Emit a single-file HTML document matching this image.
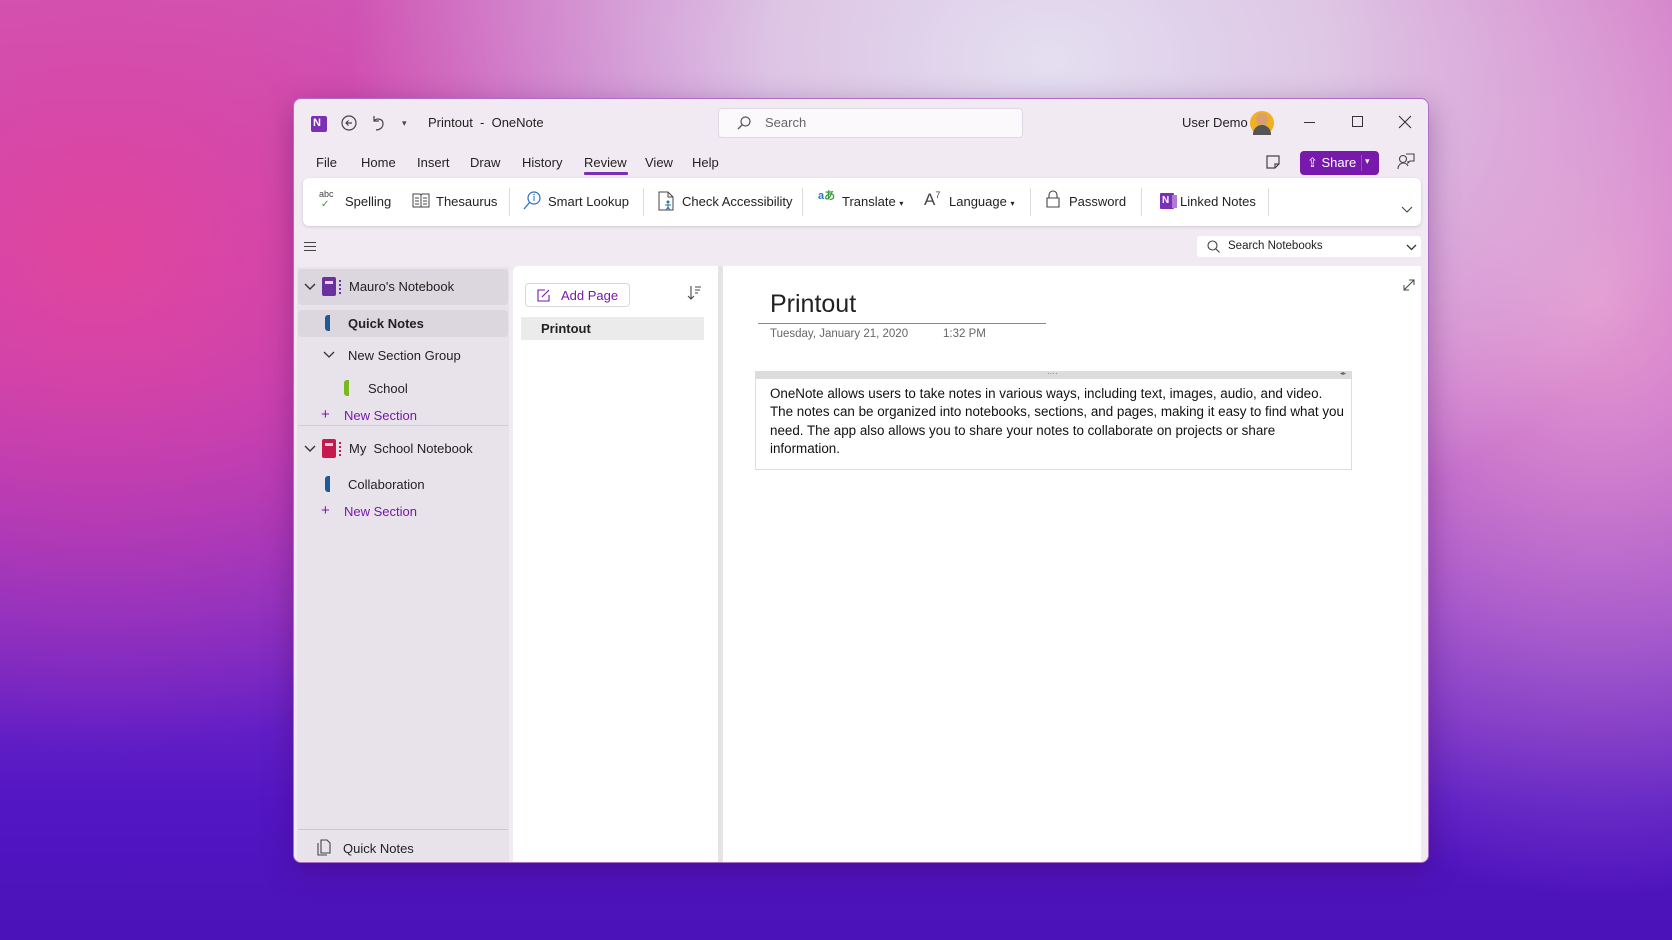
<!DOCTYPE html>
<html><head><meta charset="utf-8"><style>
*{margin:0;padding:0;box-sizing:border-box}
body{width:1672px;height:940px;overflow:hidden;position:relative;font-family:"Liberation Sans",sans-serif;color:#222;
background:
radial-gradient(ellipse 700px 500px at 1050px 60px,#e4dff0 0%,rgba(225,215,235,0.85) 40%,rgba(220,200,230,0) 100%),
radial-gradient(ellipse 500px 600px at 1600px 300px,#e39ad0 0%,rgba(220,120,200,0) 100%),
radial-gradient(ellipse 600px 500px at 100px 250px,#e0459e 0%,rgba(210,60,170,0) 100%),
linear-gradient(180deg,#c85cbf 0%,#b03cc4 40%,#7d2cc8 65%,#5316c4 85%,#4a12b8 100%);}
.a{position:absolute}
.win{left:293px;top:98px;width:1136px;height:765px;background:#f2eaf3;border-radius:8px;border:1px solid #b06cc9;overflow:hidden;box-shadow:0 8px 30px rgba(60,0,80,.35)}
.t{position:absolute;font-size:13px;white-space:nowrap;line-height:1}
svg{position:absolute;overflow:visible}
</style></head><body>
<div class="a win">
<div class="a" style="left:17px;top:17px;width:16px;height:16px;background:#7b2fb5;border-radius:2px"></div>
<div class="t" style="left:19px;top:19px;color:#fff;font-weight:bold;font-size:11px">N</div>
<svg style="left:47px;top:16px" width="16" height="16"><circle cx="8" cy="8" r="7" fill="none" stroke="#444" stroke-width="1.2"/><path d="M11 8H5M7.5 5.5L5 8l2.5 2.5" fill="none" stroke="#444" stroke-width="1.2"/></svg>
<svg style="left:76px;top:15px" width="16" height="18"><path d="M4 2v5h5M4 7c2-3 9-3 9 3 0 4-4 6-7 6" fill="none" stroke="#444" stroke-width="1.2"/></svg>
<div class="t" style="left:108px;top:20px;font-size:9px;color:#444">▾</div>
<div class="t" style="left:134px;top:17px">Printout &nbsp;-&nbsp; OneNote</div>
<div class="a" style="left:424px;top:9px;width:305px;height:30px;background:#fbf9fb;border:1px solid #e0d8e2;border-radius:4px"></div>
<svg style="left:443px;top:17px" width="14" height="14"><circle cx="8.5" cy="5.5" r="4.5" fill="none" stroke="#555" stroke-width="1.2"/><path d="M5.5 8.5L1 13" stroke="#555" stroke-width="1.3"/></svg>
<div class="t" style="left:471px;top:17px;color:#666">Search</div>
<div class="t" style="left:888px;top:17px">User Demo</div>
<div class="a" style="left:956px;top:12px;width:24px;height:24px;border-radius:50%;background:#f0b020"></div>
<div class="a" style="left:962px;top:14px;width:12px;height:13px;border-radius:50%;background:#d8a070"></div>
<div class="a" style="left:959px;top:26px;width:18px;height:10px;border-radius:9px 9px 0 0;background:#555"></div>
<div class="a" style="left:1010px;top:23px;width:11px;height:1px;background:#333"></div>
<div class="a" style="left:1058px;top:17px;width:11px;height:11px;border:1px solid #333"></div>
<svg style="left:1105px;top:17px" width="12" height="12"><path d="M0 0L12 12M12 0L0 12" stroke="#333" stroke-width="1.1"/></svg>
<div class="t" style="left:22px;top:57px">File</div>
<div class="t" style="left:67px;top:57px">Home</div>
<div class="t" style="left:123px;top:57px">Insert</div>
<div class="t" style="left:176px;top:57px">Draw</div>
<div class="t" style="left:228px;top:57px">History</div>
<div class="t" style="left:290px;top:57px">Review</div>
<div class="a" style="left:290px;top:73px;width:44px;height:3px;background:#7b2fb5;border-radius:1px"></div>
<div class="t" style="left:351px;top:57px">View</div>
<div class="t" style="left:398px;top:57px">Help</div>
<svg style="left:971px;top:55px" width="16" height="16"><path d="M2 2h12v8l-4 4H2z M10 14v-4h4" fill="none" stroke="#444" stroke-width="1.2"/></svg>
<div class="a" style="left:1006px;top:52px;width:79px;height:24px;background:#7719aa;border-radius:4px"></div>
<div class="t" style="left:1013px;top:57px;color:#fff;font-size:13px">⇪ Share</div>
<div class="a" style="left:1067px;top:56px;width:1px;height:16px;background:#9a4cc4"></div>
<div class="t" style="left:1071px;top:58px;color:#fff;font-size:9px">▾</div>
<svg style="left:1103px;top:54px" width="18" height="18"><circle cx="6" cy="6" r="3.5" fill="none" stroke="#444" stroke-width="1.1"/><path d="M1 16c0-4 3-6 5-6s4 1 5 3M9 1h8v7h-4l-2 2v-2" fill="none" stroke="#444" stroke-width="1.1"/></svg>
<div class="a" style="left:9px;top:79px;width:1118px;height:48px;background:#fff;border-radius:6px;box-shadow:0 1px 3px rgba(0,0,0,.15)"></div>
<div class="t" style="left:25px;top:91px;font-size:9px;color:#444">abc</div>
<div class="t" style="left:27px;top:101px;font-size:10px;color:#3a9a3a">✓</div>
<div class="t" style="left:51px;top:96px">Spelling</div>
<svg style="left:118px;top:94px" width="18" height="15"><path d="M1 1h7l1 1 1-1h7v13H1z M9 2v12 M3 5h4M3 8h4M3 11h4M11 5h4M11 8h4M11 11h4" fill="none" stroke="#444" stroke-width="1"/></svg>
<div class="t" style="left:142px;top:96px">Thesaurus</div>
<div class="a" style="left:215px;top:89px;width:1px;height:28px;background:#ddd"></div>
<svg style="left:229px;top:92px" width="20" height="20"><circle cx="11" cy="7" r="6" fill="none" stroke="#2a6fb8" stroke-width="1.2"/><path d="M7 11L1 18" stroke="#2a6fb8" stroke-width="1.3"/><path d="M11 5v5" stroke="#2a6fb8"/><circle cx="11" cy="3.5" r=".8" fill="#2a6fb8"/></svg>
<div class="t" style="left:254px;top:96px">Smart Lookup</div>
<div class="a" style="left:349px;top:89px;width:1px;height:28px;background:#ddd"></div>
<svg style="left:364px;top:92px" width="18" height="20"><path d="M1 1h9l5 5v13H1z M10 1v5h5" fill="none" stroke="#444" stroke-width="1"/><circle cx="10" cy="11" r="1.5" fill="#2a6fb8"/><path d="M7 14h6M10 13v5M8 19l2-3 2 3" stroke="#2a6fb8" fill="none"/></svg>
<div class="t" style="left:388px;top:96px">Check Accessibility</div>
<div class="a" style="left:508px;top:89px;width:1px;height:28px;background:#ddd"></div>
<div class="t" style="left:524px;top:92px;font-size:11px;color:#2a7ab8;font-weight:bold">a<span style="color:#3a9a3a">あ</span></div>
<div class="t" style="left:548px;top:96px">Translate <span style="font-size:8px">▾</span></div>
<div class="t" style="left:630px;top:92px;font-size:17px;color:#444">A<span style="font-size:9px;vertical-align:top">7</span></div>
<div class="t" style="left:655px;top:96px">Language <span style="font-size:8px">▾</span></div>
<div class="a" style="left:736px;top:89px;width:1px;height:28px;background:#ddd"></div>
<svg style="left:752px;top:91px" width="14" height="18"><path d="M3 8V5a4 4 0 0 1 8 0v3 M1 8h12v9H1z" fill="none" stroke="#444" stroke-width="1.1"/></svg>
<div class="t" style="left:775px;top:96px">Password</div>
<div class="a" style="left:847px;top:89px;width:1px;height:28px;background:#ddd"></div>
<div class="a" style="left:866px;top:94px;width:14px;height:16px;background:#7b2fb5;border-radius:1px"></div>
<div class="a" style="left:878px;top:96px;width:5px;height:13px;background:#b07ad8"></div>
<div class="t" style="left:868px;top:97px;color:#fff;font-weight:bold;font-size:10px">N</div>
<div class="t" style="left:886px;top:96px">Linked Notes</div>
<div class="a" style="left:974px;top:89px;width:1px;height:28px;background:#ddd"></div>
<svg style="left:1108px;top:108px" width="10" height="6"><path d="M0 0l5 5 5-5" fill="none" stroke="#444" stroke-width="1.1"/></svg>
<div class="a" style="left:10px;top:143px;width:12px;height:1px;background:#444;box-shadow:0 4px 0 #444,0 8px 0 #444"></div>
<div class="a" style="left:903px;top:137px;width:224px;height:21px;background:#fff;border-radius:3px"></div>
<svg style="left:913px;top:141px" width="13" height="13"><circle cx="5.5" cy="5.5" r="4.5" fill="none" stroke="#444" stroke-width="1.1"/><path d="M9 9l3.5 3.5" stroke="#444" stroke-width="1.2"/></svg>
<div class="t" style="left:934px;top:142px;font-size:11.5px">Search Notebooks</div>
<svg style="left:1113px;top:146px" width="9" height="5"><path d="M0 0l4.5 4.5L9 0" fill="none" stroke="#333" stroke-width="1.3"/></svg>
<div class="a" style="left:3px;top:168px;width:212px;height:597px;background:#e8e3ea"></div>
<div class="a" style="left:4px;top:170px;width:210px;height:36px;background:#dcd6de;border-radius:4px"></div>
<svg style="left:11px;top:185px" width="10" height="6"><path d="M0 0l5 5 5-5" fill="none" stroke="#333" stroke-width="1.4"/></svg>
<div class="a" style="left:28px;top:178px;width:14px;height:19px;background:#6a2fa0;border-radius:2px"></div>
<div class="a" style="left:31px;top:182px;width:8px;height:3px;background:#e8d8f4"></div>
<div class="a" style="left:45px;top:181px;width:2px;height:14px;border-left:2px dotted #6a2fa0"></div>
<div class="t" style="left:55px;top:181px">Mauro's Notebook</div>
<div class="a" style="left:4px;top:211px;width:210px;height:27px;background:#dcd6de;border-radius:4px"></div>
<div class="a" style="left:31px;top:216px;width:5px;height:16px;background:#1e5a96;border-radius:3px 0 0 3px"></div>
<div class="t" style="left:54px;top:218px;font-weight:bold">Quick Notes</div>
<svg style="left:30px;top:253px" width="10" height="6"><path d="M0 0l5 5 5-5" fill="none" stroke="#333" stroke-width="1.3"/></svg>
<div class="t" style="left:54px;top:250px">New Section Group</div>
<div class="a" style="left:50px;top:281px;width:5px;height:16px;background:#7ab822;border-radius:3px 0 0 3px"></div>
<div class="t" style="left:74px;top:283px">School</div>
<div class="t" style="left:27px;top:308px;color:#7719aa;font-size:15px">+</div>
<div class="t" style="left:50px;top:310px;color:#7719aa">New Section</div>
<div class="a" style="left:4px;top:326px;width:210px;height:1px;background:#d2ccd4"></div>
<svg style="left:11px;top:347px" width="10" height="6"><path d="M0 0l5 5 5-5" fill="none" stroke="#333" stroke-width="1.4"/></svg>
<div class="a" style="left:28px;top:340px;width:14px;height:19px;background:#c41a4e;border-radius:2px"></div>
<div class="a" style="left:31px;top:344px;width:8px;height:3px;background:#f4d0dc"></div>
<div class="a" style="left:45px;top:343px;width:2px;height:14px;border-left:2px dotted #c41a4e"></div>
<div class="t" style="left:55px;top:343px">My &nbsp;School Notebook</div>
<div class="a" style="left:31px;top:377px;width:5px;height:16px;background:#1e5a96;border-radius:3px 0 0 3px"></div>
<div class="t" style="left:54px;top:379px">Collaboration</div>
<div class="t" style="left:27px;top:404px;color:#7719aa;font-size:15px">+</div>
<div class="t" style="left:50px;top:406px;color:#7719aa">New Section</div>
<div class="a" style="left:4px;top:730px;width:210px;height:1px;background:#ccc6ce"></div>
<svg style="left:23px;top:740px" width="14" height="17"><path d="M4 1h6l3 3v10H4z M1 4v12h9" fill="none" stroke="#444" stroke-width="1.1"/></svg>
<div class="t" style="left:49px;top:743px">Quick Notes</div>
<div class="a" style="left:219px;top:167px;width:205px;height:598px;background:#fff;border-radius:6px 0 0 0"></div>
<div class="a" style="left:231px;top:184px;width:105px;height:24px;border:1px solid #d8d8d8;border-radius:4px;background:#fff"></div>
<svg style="left:243px;top:190px" width="13" height="13"><path d="M8 1H1v11h11V6 M5 8l7-7" fill="none" stroke="#7719aa" stroke-width="1.1"/></svg>
<div class="t" style="left:267px;top:190px;color:#7719aa">Add Page</div>
<svg style="left:393px;top:186px" width="14" height="15"><path d="M4 1v13M1 11l3 3 3-3M8 2h6M8 5h5M8 8h3" fill="none" stroke="#444" stroke-width="1.1"/></svg>
<div class="a" style="left:227px;top:218px;width:183px;height:23px;background:#ebebeb"></div>
<div class="t" style="left:247px;top:223px;font-weight:bold">Printout</div>
<div class="a" style="left:424px;top:167px;width:5px;height:598px;background:#e6e3e6"></div>
<div class="a" style="left:429px;top:167px;width:698px;height:598px;background:#fff"></div>
<div class="a" style="left:1127px;top:167px;width:9px;height:598px;background:#f2eaf3"></div>
<svg style="left:1109px;top:180px" width="12" height="12"><path d="M1 11L11 1M6 1h5v5M1 6v5h5" fill="none" stroke="#444" stroke-width="1"/></svg>
<div class="t" style="left:476px;top:193px;font-size:25px;color:#222">Printout</div>
<div class="a" style="left:464px;top:224px;width:288px;height:1px;background:#888"></div>
<div class="t" style="left:476px;top:230px;font-size:11.5px;color:#666">Tuesday, January 21, 2020</div>
<div class="t" style="left:649px;top:230px;font-size:11.5px;color:#666">1:32 PM</div>
<div class="a" style="left:461px;top:272px;width:597px;height:99px;border:1px solid #ddd;background:#fff"></div>
<div class="a" style="left:461px;top:272px;width:597px;height:8px;background:#dcdcdc"></div>
<div class="t" style="left:753px;top:271px;font-size:8px;color:#666">····</div>
<div class="t" style="left:1046px;top:272px;font-size:6px;color:#666">◂▸</div>
<div class="a" style="left:476px;top:286px;font-size:13.4px;line-height:18.3px;color:#111;white-space:nowrap">OneNote allows users to take notes in various ways, including text, images, audio, and video.<br>The notes can be organized into notebooks, sections, and pages, making it easy to find what you<br>need. The app also allows you to share your notes to collaborate on projects or share<br>information.</div>
</div>
</body></html>
